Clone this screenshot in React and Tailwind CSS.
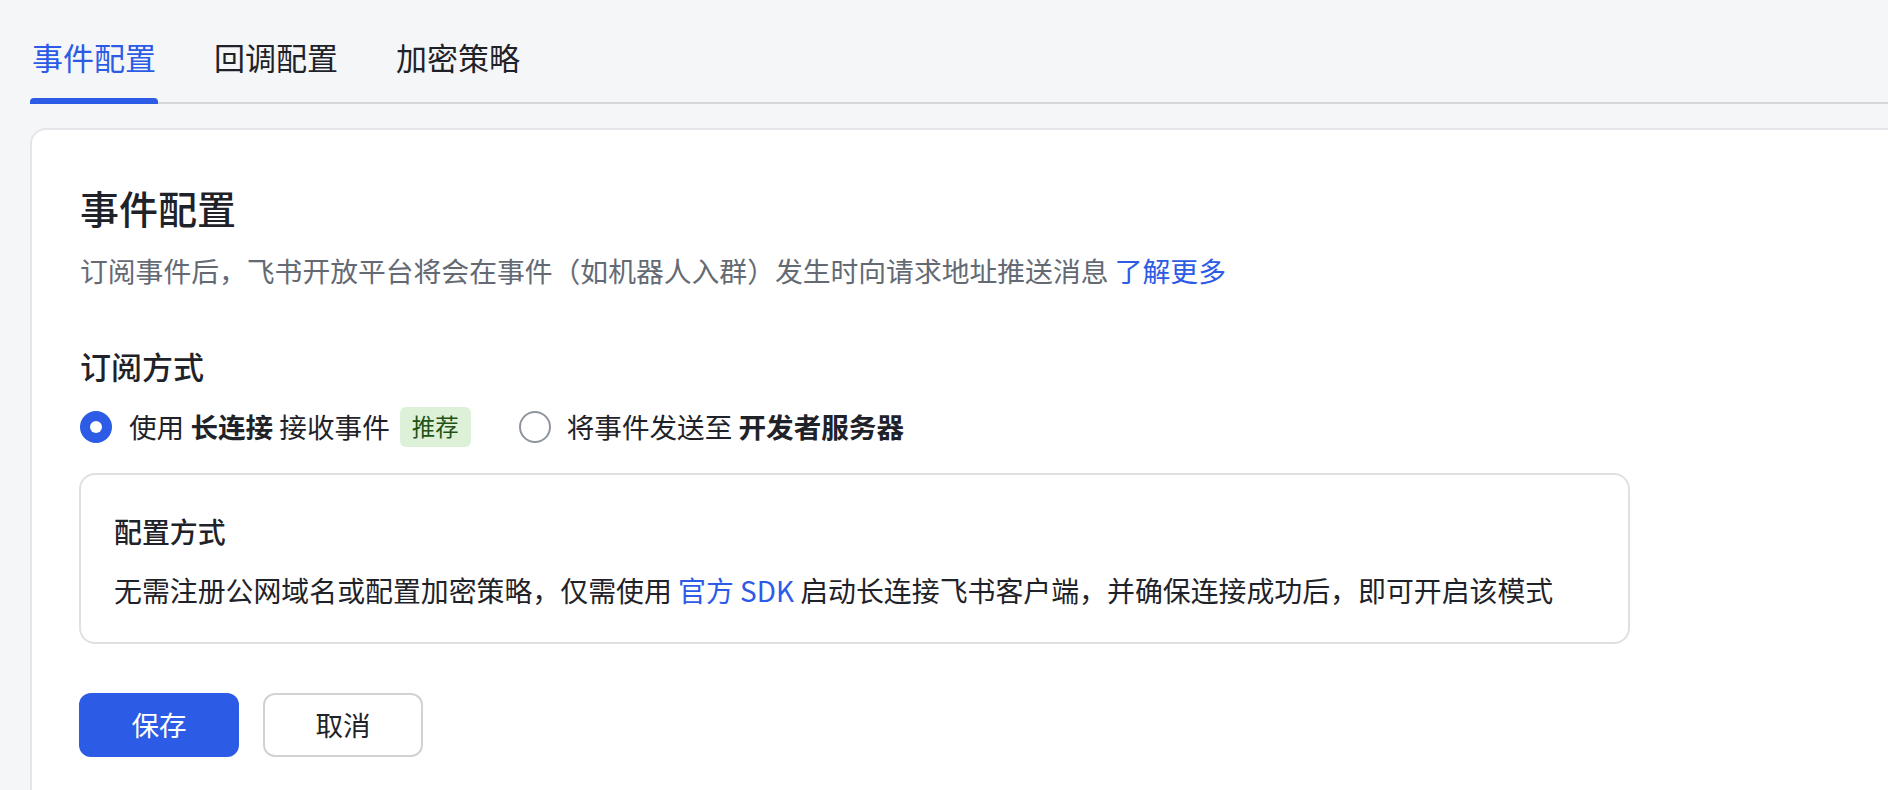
import React, { useState } from "react";

const tabs = ["事件配置", "回调配置", "加密策略"];

const Radio = ({ checked }) =>
  checked ? (
    <span className="w-[32px] h-[32px] rounded-full bg-[#2c5be6] flex items-center justify-center shrink-0">
      <span className="w-[12px] h-[12px] rounded-full bg-white" />
    </span>
  ) : (
    <span className="w-[32px] h-[32px] rounded-full border-2 border-[#8f959e] bg-white shrink-0" />
  );

const App = () => {
  const [activeTab, setActiveTab] = useState(0);
  const [mode, setMode] = useState("ws");

  return (
    <div className="w-full h-[790px] overflow-hidden bg-[#f5f6f7] font-['Noto_Sans_CJK_SC','Noto_Sans',sans-serif] text-[#1f2329]">
      {/* tabs */}
      <div className="ml-[30px] pt-[34px] flex gap-[54px] border-b-2 border-[#d5d7da]">
        {tabs.map((tab, i) => (
          <div
            key={tab}
            className="flex flex-col cursor-pointer"
            onClick={() => setActiveTab(i)}
          >
            <span
              className={
                "px-[2px] text-[31px] leading-[46px] " +
                (activeTab === i ? "text-[#2c5be6]" : "text-[#1f2329]")
              }
            >
              {tab}
            </span>
            <span
              className={
                "mt-[18px] h-[6px] -mb-[2px] rounded-t-[4px] relative " +
                (activeTab === i ? "bg-[#2c5be6]" : "bg-transparent")
              }
            />
          </div>
        ))}
      </div>

      {/* card */}
      <div className="mt-[24px] ml-[30px] w-[1900px] h-[700px] bg-white border-2 border-[#e4e5e8] rounded-t-[16px] pl-[48px] pt-[50px]">
        <h1 className="text-[39px] leading-[54px] font-medium">事件配置</h1>
        <p className="mt-[16px] text-[27.8px] leading-[40px] text-[#646a73]">
          订阅事件后，飞书开放平台将会在事件（如机器人入群）发生时向请求地址推送消息{" "}
          <a className="text-[#2c5be6] cursor-pointer">了解更多</a>
        </p>

        <h2 className="mt-[54px] text-[31px] leading-[44px] font-medium">订阅方式</h2>
        <div className="mt-[17px] h-[44px] flex items-center text-[27.6px]">
          <label
            className="flex items-center cursor-pointer"
            onClick={() => setMode("ws")}
          >
            <Radio checked={mode === "ws"} />
            <span className="ml-[17px]">
              使用 <b className="font-bold">长连接</b> 接收事件
            </span>
            <span className="ml-[10px] h-[40px] px-[12px] rounded-[6px] bg-[#dcf1d8] text-[#245216] text-[23.5px] flex items-center">
              推荐
            </span>
          </label>
          <label
            className="ml-[48px] flex items-center cursor-pointer"
            onClick={() => setMode("server")}
          >
            <Radio checked={mode === "server"} />
            <span className="ml-[16px]">
              将事件发送至 <b className="font-bold">开发者服务器</b>
            </span>
          </label>
        </div>

        <div className="mt-[24px] w-[1551px] -ml-[1px] border-2 border-[#dee0e3] rounded-[16px] px-[33px] pt-[36px] pb-[32px] text-[27.9px]">
          <div className="leading-[40px] font-medium">配置方式</div>
          <div className="mt-[19px] leading-[40px]">
            无需注册公网域名或配置加密策略，仅需使用{" "}
            <a className="text-[#2c5be6] cursor-pointer">官方 SDK</a>{" "}
            启动长连接飞书客户端，并确保连接成功后，即可开启该模式
          </div>
        </div>

        <div className="mt-[49px] -ml-[1px] flex gap-[24px] text-[27.6px]">
          <button className="w-[160px] h-[64px] rounded-[12px] bg-[#2c5be6] text-white">
            保存
          </button>
          <button className="w-[160px] h-[64px] rounded-[12px] border-2 border-[#d0d3d6] bg-white text-[#1f2329]">
            取消
          </button>
        </div>
      </div>
    </div>
  );
};

export default App;
